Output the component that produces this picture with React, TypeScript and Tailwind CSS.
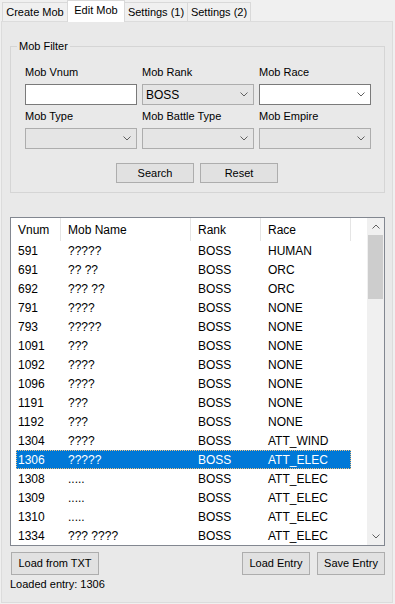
import React from 'react';

type Mob = { vnum: string; name: string; rank: string; race: string };

const mobs: Mob[] = [
  { vnum: '591', name: '?????', rank: 'BOSS', race: 'HUMAN' },
  { vnum: '691', name: '?? ??', rank: 'BOSS', race: 'ORC' },
  { vnum: '692', name: '??? ??', rank: 'BOSS', race: 'ORC' },
  { vnum: '791', name: '????', rank: 'BOSS', race: 'NONE' },
  { vnum: '793', name: '?????', rank: 'BOSS', race: 'NONE' },
  { vnum: '1091', name: '???', rank: 'BOSS', race: 'NONE' },
  { vnum: '1092', name: '????', rank: 'BOSS', race: 'NONE' },
  { vnum: '1096', name: '????', rank: 'BOSS', race: 'NONE' },
  { vnum: '1191', name: '???', rank: 'BOSS', race: 'NONE' },
  { vnum: '1192', name: '???', rank: 'BOSS', race: 'NONE' },
  { vnum: '1304', name: '????', rank: 'BOSS', race: 'ATT_WIND' },
  { vnum: '1306', name: '?????', rank: 'BOSS', race: 'ATT_ELEC' },
  { vnum: '1308', name: '.....', rank: 'BOSS', race: 'ATT_ELEC' },
  { vnum: '1309', name: '.....', rank: 'BOSS', race: 'ATT_ELEC' },
  { vnum: '1310', name: '.....', rank: 'BOSS', race: 'ATT_ELEC' },
  { vnum: '1334', name: '??? ????', rank: 'BOSS', race: 'ATT_ELEC' },
];

const Chevron = ({ up = false }: { up?: boolean }) => (
  <svg width="8" height="5" viewBox="0 0 8 5" className="shrink-0">
    <polyline
      points={up ? '0.5,4.5 4,1 7.5,4.5' : '0.5,0.5 4,4 7.5,0.5'}
      fill="none"
      stroke="#606060"
      strokeWidth="1"
    />
  </svg>
);

const Combo = ({ value = '', editable = false }: { value?: string; editable?: boolean }) => (
  <div
    className={`h-[21px] flex items-center justify-between pl-[3px] pr-[5px] border ${
      editable ? 'bg-white border-[#7a7a7a]' : 'bg-[#e5e5e5] border-[#adadad]'
    }`}
  >
    <span className="text-[12px] leading-none">{value}</span>
    <Chevron />
  </div>
);

const Field = ({ label, children }: { label: string; children: React.ReactNode }) => (
  <div className="flex flex-col">
    <span className="leading-[13px] h-[13px] mb-[5px]">{label}</span>
    {children}
  </div>
);

const Button = ({ label, className }: { label: string; className: string }) => (
  <button className={`bg-[#e1e1e1] border border-[#adadad] flex items-center justify-center leading-none ${className}`}>
    {label}
  </button>
);

const Tab = ({ label, active = false, className }: { label: string; active?: boolean; className: string }) => (
  <div
    className={`flex items-center justify-center border border-b-0 border-[#d9d9d9] ${
      active ? 'h-[22px] bg-white relative z-10 pb-[2px]' : 'h-[19px] mt-[2px] bg-[#f0f0f0]'
    } ${className}`}
  >
    {label}
  </div>
);

export default function App() {
  return (
    <div className="w-[395px] h-[604px] bg-[#f0f0f0] text-[11px] text-black font-['Liberation_Sans',Arial,sans-serif] overflow-hidden">
      <div className="h-[21px] flex items-start">
        <Tab label="Create Mob" className="ml-[2px] w-[66px]" />
        <Tab label="Edit Mob" active className="-ml-px w-[58px]" />
        <Tab label="Settings (1)" className="-ml-px w-[64px]" />
        <Tab label="Settings (2)" className="-ml-px w-[64px]" />
      </div>

      <div className="ml-[1px] w-[392px] h-[582px] border border-[#dcdcdc] bg-[#e9e9e9] flex flex-col">
        {/* Mob Filter group */}
        <div className="relative ml-[8px] mt-[24px] w-[375px] h-[147px] border border-[#d5d5d5]">
          <span className="absolute left-[6px] top-[-7px] px-[2px] bg-[#e9e9e9] leading-[13px]">Mob Filter</span>
          <div className="pl-[14px] pt-[19px]">
            <div className="grid grid-cols-[112px_112px_112px] gap-x-[5px] gap-y-[5px]">
              <Field label="Mob Vnum">
                <div className="h-[21px] bg-white border border-[#7a7a7a]" />
              </Field>
              <Field label="Mob Rank">
                <Combo value="BOSS" />
              </Field>
              <Field label="Mob Race">
                <Combo editable />
              </Field>
              <Field label="Mob Type">
                <Combo />
              </Field>
              <Field label="Mob Battle Type">
                <Combo />
              </Field>
              <Field label="Mob Empire">
                <Combo />
              </Field>
            </div>
            <div className="flex gap-[6px] ml-[91px] mt-[14px]">
              <Button label="Search" className="w-[78px] h-[20px]" />
              <Button label="Reset" className="w-[78px] h-[20px]" />
            </div>
          </div>
        </div>

        {/* List view */}
        <div className="ml-[8px] mt-[24px] w-[375px] h-[329px] border border-[#828790] bg-white flex overflow-hidden">
          <div className="w-[356px] flex flex-col text-[12px]">
            <div className="h-[23px] flex shrink-0">
              {[
                { t: 'Vnum', w: 'w-[50px]' },
                { t: 'Mob Name', w: 'w-[130px]' },
                { t: 'Rank', w: 'w-[70px]' },
                { t: 'Race', w: 'w-[90px]' },
              ].map((c) => (
                <div key={c.t} className={`${c.w} h-full flex items-center pl-[7px] border-r border-[#e5e5e5]`}>
                  {c.t}
                </div>
              ))}
            </div>
            {mobs.map((m) => {
              const sel = m.vnum === '1306';
              return (
                <div
                  key={m.vnum}
                  className={`ml-[5px] w-[335px] h-[19px] shrink-0 flex items-center ${
                    sel ? 'bg-[#0078d7] text-white outline-1 outline-dotted outline-[#f0c080] -outline-offset-1' : ''
                  }`}
                >
                  <span className="w-[45px] pl-[2px]">{m.vnum}</span>
                  <span className="w-[130px] pl-[7px]">{m.name}</span>
                  <span className="w-[70px] pl-[7px]">{m.rank}</span>
                  <span className="w-[90px] pl-[7px]">{m.race}</span>
                </div>
              );
            })}
          </div>
          {/* scrollbar */}
          <div className="w-[17px] h-full bg-[#f0f0f0] flex flex-col">
            <div className="h-[17px] flex items-center justify-center">
              <Chevron up />
            </div>
            <div className="mx-[1px] h-[64px] bg-[#cdcdcd]" />
            <div className="flex-1" />
            <div className="h-[17px] flex items-center justify-center">
              <Chevron />
            </div>
          </div>
        </div>

        {/* bottom buttons */}
        <div className="flex items-center mt-[6px] ml-[9px] w-[374px]">
          <Button label="Load from TXT" className="w-[88px] h-[23px]" />
          <div className="flex-1" />
          <Button label="Load Entry" className="w-[68px] h-[23px]" />
          <Button label="Save Entry" className="w-[68px] h-[23px] ml-[7px]" />
        </div>
        <div className="ml-[8px] mt-[3px] leading-[13px]">Loaded entry: 1306</div>
      </div>
    </div>
  );
}
